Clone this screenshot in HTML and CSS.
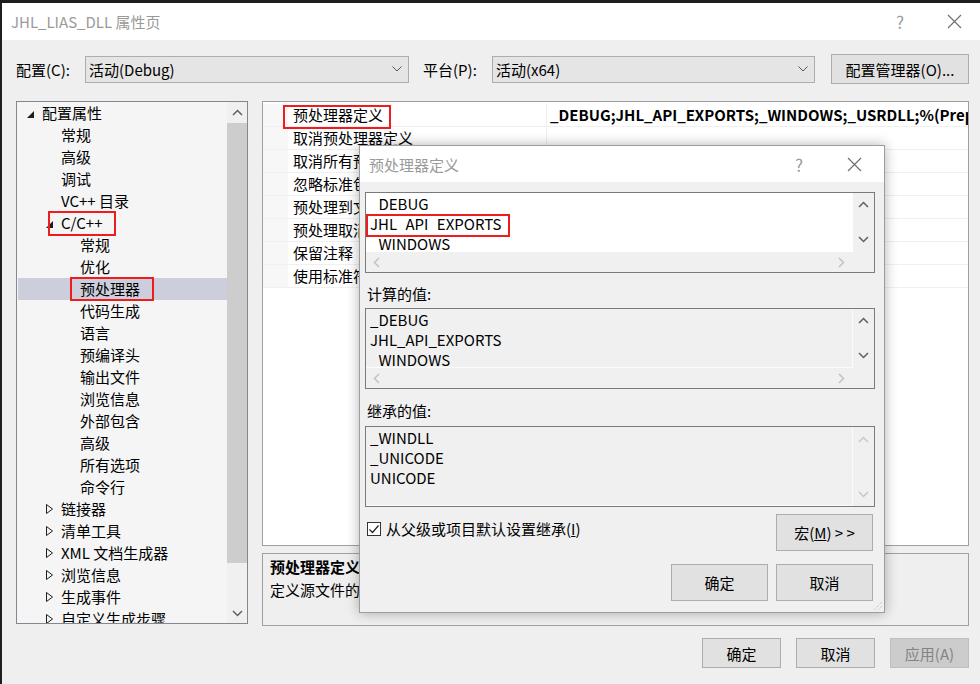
FILE: index.html
```html
<!DOCTYPE html>
<html lang="zh-CN">

<head>
    <meta charset="UTF-8">
    <title>JHL_LIAS_DLL 属性页</title>
    <link rel="stylesheet" href="styles.css">
</head>

<body>
    <div class="window">
        <div class="titlebar">
            <span class="title">JHL_LIAS_DLL 属性页</span>
            <span class="help">?</span>
            <svg class="close" width="15" height="15" viewBox="0 0 15 15"><path d="M1 1L14 14M14 1L1 14" stroke="#707070" stroke-width="1.2" fill="none"/></svg>
        </div>

        <!-- configuration / platform -->
        <div class="config-row">
            <span class="cfg-label">配置(C):</span>
            <div class="select sel-config">
                <span>活动(Debug)</span>
                <svg width="10" height="6" viewBox="0 0 10 6"><path d="M0.5 0.5L5 5L9.5 0.5" stroke="#555" fill="none"/></svg>
            </div>
            <span class="cfg-label plat-label">平台(P):</span>
            <div class="select sel-platform">
                <span>活动(x64)</span>
                <svg width="10" height="6" viewBox="0 0 10 6"><path d="M0.5 0.5L5 5L9.5 0.5" stroke="#555" fill="none"/></svg>
            </div>
            <button class="btn btn-manager">配置管理器(O)...</button>
        </div>

        <div class="main">
            <div class="tree">
                <div class="tree-list">
                    <div class="node lvl0"><span class="exp"><svg width="7" height="7" viewBox="0 0 7 7"><path d="M7 0V7H0Z" fill="#1e1e1e"/></svg></span>配置属性</div>
                    <div class="node lvl1"><span class="exp"></span>常规</div>
                    <div class="node lvl1"><span class="exp"></span>高级</div>
                    <div class="node lvl1"><span class="exp"></span>调试</div>
                    <div class="node lvl1"><span class="exp"></span>VC++ 目录</div>
                    <div class="node lvl1"><span class="exp"><svg width="7" height="7" viewBox="0 0 7 7"><path d="M7 0V7H0Z" fill="#1e1e1e"/></svg></span>C/C++</div>
                    <div class="node lvl2"><span class="exp"></span>常规</div>
                    <div class="node lvl2"><span class="exp"></span>优化</div>
                    <div class="node lvl2 selected"><span class="exp"></span>预处理器</div>
                    <div class="node lvl2"><span class="exp"></span>代码生成</div>
                    <div class="node lvl2"><span class="exp"></span>语言</div>
                    <div class="node lvl2"><span class="exp"></span>预编译头</div>
                    <div class="node lvl2"><span class="exp"></span>输出文件</div>
                    <div class="node lvl2"><span class="exp"></span>浏览信息</div>
                    <div class="node lvl2"><span class="exp"></span>外部包含</div>
                    <div class="node lvl2"><span class="exp"></span>高级</div>
                    <div class="node lvl2"><span class="exp"></span>所有选项</div>
                    <div class="node lvl2"><span class="exp"></span>命令行</div>
                    <div class="node lvl1"><span class="exp"><svg class="tri" width="8" height="10" viewBox="0 0 8 10"><path d="M0.5 0.5L6.5 5L0.5 9.5Z" fill="none" stroke="#1e1e1e"/></svg></span>链接器</div>
                    <div class="node lvl1"><span class="exp"><svg class="tri" width="8" height="10" viewBox="0 0 8 10"><path d="M0.5 0.5L6.5 5L0.5 9.5Z" fill="none" stroke="#1e1e1e"/></svg></span>清单工具</div>
                    <div class="node lvl1"><span class="exp"><svg class="tri" width="8" height="10" viewBox="0 0 8 10"><path d="M0.5 0.5L6.5 5L0.5 9.5Z" fill="none" stroke="#1e1e1e"/></svg></span>XML 文档生成器</div>
                    <div class="node lvl1"><span class="exp"><svg class="tri" width="8" height="10" viewBox="0 0 8 10"><path d="M0.5 0.5L6.5 5L0.5 9.5Z" fill="none" stroke="#1e1e1e"/></svg></span>浏览信息</div>
                    <div class="node lvl1"><span class="exp"><svg class="tri" width="8" height="10" viewBox="0 0 8 10"><path d="M0.5 0.5L6.5 5L0.5 9.5Z" fill="none" stroke="#1e1e1e"/></svg></span>生成事件</div>
                    <div class="node lvl1"><span class="exp"><svg class="tri" width="8" height="10" viewBox="0 0 8 10"><path d="M0.5 0.5L6.5 5L0.5 9.5Z" fill="none" stroke="#1e1e1e"/></svg></span>自定义生成步骤</div>
                </div>
                <div class="vscroll">
                    <div class="sb-btn"><svg width="11" height="7" viewBox="0 0 11 7"><path d="M1 6L5.5 1.5L10 6" stroke="#606060" stroke-width="1.5" fill="none"/></svg></div>
                    <div class="sb-thumb"></div>
                    <div class="sb-track"></div>
                    <div class="sb-btn"><svg width="11" height="7" viewBox="0 0 11 7"><path d="M1 1L5.5 5.5L10 1" stroke="#606060" stroke-width="1.5" fill="none"/></svg></div>
                </div>
            </div>

            <div class="right-col">
                <div class="grid">
                    <div class="prow"><div class="gutter"></div><div class="pname">预处理器定义</div><div class="pval">_DEBUG;JHL_API_EXPORTS;_WINDOWS;_USRDLL;%(PreprocessorDefinitions)</div></div>
                    <div class="prow"><div class="gutter"></div><div class="pname">取消预处理器定义</div><div class="pval"></div></div>
                    <div class="prow"><div class="gutter"></div><div class="pname">取消所有预处理器定义</div><div class="pval"></div></div>
                    <div class="prow"><div class="gutter"></div><div class="pname">忽略标准包含路径</div><div class="pval"></div></div>
                    <div class="prow"><div class="gutter"></div><div class="pname">预处理到文件</div><div class="pval"></div></div>
                    <div class="prow"><div class="gutter"></div><div class="pname">预处理取消显示行号</div><div class="pval"></div></div>
                    <div class="prow"><div class="gutter"></div><div class="pname">保留注释</div><div class="pval"></div></div>
                    <div class="prow"><div class="gutter"></div><div class="pname">使用标准符合性预处理器</div><div class="pval"></div></div>
                </div>
                <div class="desc">
                    <div class="desc-title">预处理器定义</div>
                    <div class="desc-text">定义源文件的预处理符号。</div>
                </div>
            </div>
        </div>

        <div class="footer">
            <button class="btn btn-foot">确定</button>
            <button class="btn btn-foot">取消</button>
            <button class="btn btn-foot disabled">应用(A)</button>
        </div>

        <!-- annotation boxes -->
        <div class="mark mark-def"></div>
        <div class="mark mark-cpp"></div>
        <div class="mark mark-pre"></div>

        <!-- modal dialog -->
        <div class="dialog">
            <div class="dlg-title">
                <span class="title">预处理器定义</span>
                <span class="help">?</span>
                <svg class="close" width="15" height="15" viewBox="0 0 15 15"><path d="M1 1L14 14M14 1L1 14" stroke="#707070" stroke-width="1.2" fill="none"/></svg>
            </div>
            <div class="dlg-body">
                <div class="editbox editable">
                    <div class="edit-text clipped">
                        <div class="ln">_DEBUG</div>
                        <div class="ln">JHL_API_EXPORTS</div>
                        <div class="ln">_WINDOWS</div>
                    </div>
                    <div class="ev-scroll">
                        <svg width="11" height="7" viewBox="0 0 11 7"><path d="M1 6L5.5 1.5L10 6" stroke="#606060" stroke-width="1.5" fill="none"/></svg>
                        <svg width="11" height="7" viewBox="0 0 11 7"><path d="M1 1L5.5 5.5L10 1" stroke="#606060" stroke-width="1.5" fill="none"/></svg>
                    </div>
                    <div class="eh-scroll">
                        <svg width="7" height="11" viewBox="0 0 7 11"><path d="M6 1L1.5 5.5L6 10" stroke="#c2c2c2" stroke-width="1.5" fill="none"/></svg>
                        <svg width="7" height="11" viewBox="0 0 7 11"><path d="M1 1L5.5 5.5L1 10" stroke="#c2c2c2" stroke-width="1.5" fill="none"/></svg>
                    </div>
                    <div class="corner"></div>
                </div>

                <div class="dlg-label">计算的值:</div>
                <div class="editbox readonly">
                    <div class="edit-text">
                        <div class="ln">_DEBUG</div>
                        <div class="ln">JHL_API_EXPORTS</div>
                        <div class="ln">_WINDOWS</div>
                    </div>
                    <div class="ev-scroll">
                        <svg width="11" height="7" viewBox="0 0 11 7"><path d="M1 6L5.5 1.5L10 6" stroke="#606060" stroke-width="1.5" fill="none"/></svg>
                        <svg width="11" height="7" viewBox="0 0 11 7"><path d="M1 1L5.5 5.5L10 1" stroke="#606060" stroke-width="1.5" fill="none"/></svg>
                    </div>
                    <div class="eh-scroll">
                        <svg width="7" height="11" viewBox="0 0 7 11"><path d="M6 1L1.5 5.5L6 10" stroke="#c2c2c2" stroke-width="1.5" fill="none"/></svg>
                        <svg width="7" height="11" viewBox="0 0 7 11"><path d="M1 1L5.5 5.5L1 10" stroke="#c2c2c2" stroke-width="1.5" fill="none"/></svg>
                    </div>
                    <div class="corner"></div>
                </div>

                <div class="dlg-label second">继承的值:</div>
                <div class="editbox readonly noh">
                    <div class="edit-text">
                        <div class="ln">_WINDLL</div>
                        <div class="ln">_UNICODE</div>
                        <div class="ln">UNICODE</div>
                    </div>
                    <div class="ev-scroll tall">
                        <svg width="11" height="7" viewBox="0 0 11 7"><path d="M1 6L5.5 1.5L10 6" stroke="#c8c8c8" stroke-width="1.5" fill="none"/></svg>
                        <svg width="11" height="7" viewBox="0 0 11 7"><path d="M1 1L5.5 5.5L10 1" stroke="#c8c8c8" stroke-width="1.5" fill="none"/></svg>
                    </div>
                </div>

                <div class="inherit-row">
                    <label class="check">
                        <span class="box"><svg width="12" height="12" viewBox="0 0 12 12"><path d="M1.5 6.5L4.5 9.5L10.5 2.5" stroke="#222" stroke-width="1.2" fill="none"/></svg></span>
                        <span>从父级或项目默认设置继承(<u>I</u>)</span>
                    </label>
                    <button class="btn btn-dlg">宏(<u>M</u>) &gt; &gt;</button>
                </div>

                <div class="dlg-buttons">
                    <button class="btn btn-dlg">确定</button>
                    <button class="btn btn-dlg">取消</button>
                </div>
            </div>
            <svg class="grip" width="12" height="12" viewBox="0 0 12 12"><path d="M11 3L3 11M11 7L7 11" stroke="#b8b8b8" stroke-dasharray="1 1" fill="none"/></svg>
            <div class="mark mark-jhl"></div>
        </div>
    </div>
</body>

</html>
```

FILE: styles.css
```css
* {
    box-sizing: border-box;
}

body {
    margin: 0;
    background: #1e1e1e;
    font-family: "Noto Sans CJK SC", sans-serif;
    font-size: 15px;
    color: #000;
    overflow: hidden;
}

.window {
    position: relative;
    margin: 3px 0 0 2px;
    width: 978px;
    height: 681px;
    background: #efefef;
}

.titlebar {
    height: 37px;
    background: #fff;
    display: flex;
    align-items: center;
    padding-left: 9px;
}

.title {
    color: #9a9a9a;
    flex: 1;
}

.help {
    color: #9a9a9a;
    font-size: 17px;
    margin-right: 43px;
}

.titlebar .close {
    margin-right: 18px;
}

/* config row */
.config-row {
    display: flex;
    align-items: center;
    padding: 14px 0 0 14px;
    height: 44px;
}

.cfg-label {
    width: 69px;
}

.plat-label {
    margin-left: 14px;
}

.select {
    height: 27px;
    border: 1px solid #adadad;
    background: #e5e5e5;
    display: flex;
    align-items: center;
    justify-content: space-between;
    padding: 0 6px 0 3px;
}

.sel-config {
    width: 324px;
}

.sel-platform {
    width: 323px;
}

.btn {
    font-family: inherit;
    font-size: 15px;
    color: #000;
    background: #e1e1e1;
    border: 1px solid #adadad;
    padding: 0;
}

.btn-manager {
    margin-left: 16px;
    width: 138px;
    height: 30px;
}

/* main area */
.main {
    display: flex;
    margin: 17px 0 0 14px;
    height: 525px;
}

.tree {
    width: 232px;
    height: 523px;
    border: 1px solid #828790;
    background: #f5f5f5;
    display: flex;
    overflow: hidden;
}

.tree-list {
    flex: 1;
    overflow: hidden;
}

.node {
    height: 22px;
    display: flex;
    align-items: center;
    white-space: nowrap;
    padding-bottom: 1px;
}

.node.lvl0 { padding-left: 6px; }
.node.lvl1 { padding-left: 25px; }
.node.lvl2 { padding-left: 44px; }

.node.selected {
    background: #cccedb;
    margin-left: 1px;
    padding-left: 43px;
}

.exp {
    width: 19px;
    flex: none;
    display: flex;
    align-items: center;
    padding-left: 4px;
    padding-top: 3px;
}

.exp .tri {
    margin-top: -3px;
}

.vscroll {
    width: 20px;
    background: #f0f0f0;
    display: flex;
    flex-direction: column;
}

.sb-btn {
    height: 20px;
    display: flex;
    align-items: center;
    justify-content: center;
    flex: none;
}

.sb-thumb {
    height: 440px;
    margin-top: 1px;
    background: #cdcdcd;
    flex: none;
}

.sb-track {
    flex: 1;
}

.right-col {
    margin-left: 14px;
    width: 707px;
    display: flex;
    flex-direction: column;
}

.grid {
    height: 445px;
    border: 1px solid #a0a0a0;
    background: #fff;
    padding-top: 2px;
}

.prow {
    height: 23px;
    display: flex;
    align-items: stretch;
    border-bottom: 1px solid #f0f0f0;
    white-space: nowrap;
}

.gutter {
    width: 25px;
    background: #f7f7f7;
}

.pname {
    width: 259px;
    padding-left: 5px;
    border-right: 1px solid #f0f0f0;
    line-height: 22px;
}

.pval {
    flex: 1;
    padding-left: 3px;
    font-weight: bold;
    overflow: hidden;
    line-height: 22px;
}

.desc {
    margin-top: 7px;
    height: 73px;
    border: 1px solid #a0a0a0;
    padding: 1px 7px;
    line-height: 23px;
}

.desc-title {
    font-weight: bold;
}

.footer {
    display: flex;
    justify-content: flex-end;
    gap: 15px;
    margin-top: 12px;
    padding-right: 11px;
}

.btn-foot {
    width: 79px;
    height: 30px;
}

.btn.disabled {
    background: #cccccc;
    border-color: #bfbfbf;
    color: #838383;
}

/* red annotation boxes */
.mark {
    position: absolute;
    border: 2px solid #ee1c1c;
    pointer-events: none;
}

.mark-def { left: 281px; top: 102px; width: 108px; height: 24px; }
.mark-cpp { left: 46px; top: 208px; width: 68px; height: 25px; }
.mark-pre { left: 68px; top: 274px; width: 84px; height: 24px; }
.mark-jhl { left: 6px; top: 68px; width: 144px; height: 23px; }

/* dialog */
.dialog {
    position: absolute;
    left: 357px;
    top: 142px;
    width: 526px;
    height: 468px;
    background: #f0f0f0;
    border: 1px solid #9c9c9c;
    box-shadow: 0 0 12px rgba(0, 0, 0, 0.3);
}

.dlg-title {
    height: 36px;
    background: #fff;
    display: flex;
    align-items: center;
    padding-left: 9px;
}

.dlg-title .help {
    margin-right: 44px;
}

.dlg-title .close {
    margin-right: 22px;
}

.dlg-body {
    padding: 10px 11px 0 5px;
}

.editbox {
    width: 510px;
    height: 81px;
    border: 1px solid #7a7a7a;
    display: grid;
    grid-template-columns: 1fr 21px;
    grid-template-rows: 1fr 20px;
    background: #f0f0f0;
}

.editbox.noh {
    grid-template-rows: 1fr;
}

.edit-text {
    padding: 1px 0 0 4px;
    overflow: hidden;
    white-space: nowrap;
}

.editable .edit-text {
    background: #fff;
}

.readonly .edit-text {
    border-right: 1px solid #fbfbfb;
    border-bottom: 1px solid #fbfbfb;
}

.ln {
    height: 20px;
    line-height: 20px;
}

/* the edit control cuts off the underscores on its lines */
.clipped .ln {
    height: 17px;
    margin-bottom: 3px;
    overflow: hidden;
}

.ev-scroll {
    display: flex;
    flex-direction: column;
    justify-content: space-between;
    align-items: center;
    padding: 8px 0 9px;
}

.ev-scroll.tall {
    padding: 9px 0 8px;
}

.eh-scroll {
    display: flex;
    justify-content: space-between;
    align-items: center;
    padding: 0 8px 0 7px;
}

.dlg-label {
    margin-top: 11px;
    margin-bottom: 4px;
    line-height: 20px;
    padding-left: 2px;
}

.dlg-label.second {
    margin-top: 12px;
    margin-bottom: 5px;
}

.inherit-row {
    display: flex;
    justify-content: space-between;
    align-items: flex-start;
    margin-top: 7px;
    padding-left: 2px;
}

.check {
    display: flex;
    align-items: center;
    gap: 5px;
    margin-top: 4px;
}

.box {
    width: 14px;
    height: 14px;
    border: 1px solid #333;
    background: #fff;
    display: flex;
    align-items: center;
    justify-content: center;
}

.btn-dlg {
    width: 97px;
    height: 37px;
}

.dlg-buttons {
    display: flex;
    justify-content: flex-end;
    gap: 8px;
    margin-top: 13px;
}

.grip {
    position: absolute;
    right: 1px;
    bottom: 1px;
}
```
